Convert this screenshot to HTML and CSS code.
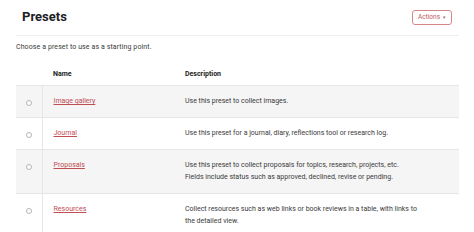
FILE: index.html
```html
<!DOCTYPE html>
<html lang="en">

<head>
  <meta charset="UTF-8">
  <meta name="viewport" content="width=device-width, initial-scale=1.0">
  <title>Presets</title>
  <link rel="stylesheet" href="styles.css">
</head>

<body>

  <div class="page">
    <div class="page-head">
      <h2>Presets</h2>
      <button class="actions">Actions <span class="caret">&#9662;</span></button>
    </div>
    <p class="intro">Choose a preset to use as a starting point.</p>

    <table class="presets">
      <thead>
        <tr>
          <th class="col-select"></th>
          <th class="col-name">Name</th>
          <th>Description</th>
        </tr>
      </thead>
      <tbody>
        <tr>
          <td class="col-select"><span class="radio"></span></td>
          <td class="col-name"><a href="#">Image gallery</a></td>
          <td>Use this preset to collect images.</td>
        </tr>
        <tr>
          <td class="col-select"><span class="radio"></span></td>
          <td class="col-name"><a href="#">Journal</a></td>
          <td>Use this preset for a journal, diary, reflections tool or research log.</td>
        </tr>
        <tr>
          <td class="col-select"><span class="radio"></span></td>
          <td class="col-name"><a href="#">Proposals</a></td>
          <td>Use this preset to collect proposals for topics, research, projects, etc.<br>Fields include status such as approved, declined, revise or pending.</td>
        </tr>
        <tr>
          <td class="col-select"><span class="radio"></span></td>
          <td class="col-name"><a href="#">Resources</a></td>
          <td>Collect resources such as web links or book reviews in a table, with links to<br>the detailed view.</td>
        </tr>
      </tbody>
    </table>
  </div>

</body>

</html>
```

FILE: styles.css
```css
* {
  margin: 0;
  padding: 0;
  box-sizing: border-box;
}

body {
  font-family: Roboto, "Liberation Sans", sans-serif;
  font-size: 7px;
  line-height: 12px;
  color: #3a3a3a;
  background: #fff;
}

.page {
  padding: 0 15px 0 16px;
}

.page-head {
  height: 36px;
  display: flex;
  align-items: center;
  justify-content: space-between;
  border-bottom: 1px solid #eeeeee;
  padding: 0 7px 1px 6px;
}

.page-head h2 {
  font-size: 13px;
  font-weight: 700;
  color: #1d2125;
  line-height: 16px;
}

.actions {
  font-family: inherit;
  font-size: 6.5px;
  color: #c25a60;
  background: #fff;
  border: 1px solid #d8858a;
  border-radius: 3px;
  height: 15px;
  padding: 0 5px;
  display: flex;
  align-items: center;
  gap: 3px;
}

.caret {
  font-size: 5px;
}

.intro {
  padding-top: 5px;
  height: 26px;
  letter-spacing: 0.1px;
}

.presets {
  width: 100%;
  border-collapse: collapse;
}

.presets th {
  text-align: left;
  font-weight: 700;
  color: #222;
  padding: 6px 11px 5px;
}

.presets td {
  padding: 9px 11px 10px;
  vertical-align: top;
  border-top: 1px solid #e6e6e6;
}

.presets tbody tr:nth-child(odd) {
  background: #f5f5f5;
}

.presets .col-select {
  width: 26px;
  padding: 0;
  text-align: center;
}

.presets td.col-select {
  padding-top: 12px;
}

.presets .col-name {
  width: 132px;
}

.presets td.col-name {
  border-left: 1px solid #e6e6e6;
}

.radio {
  display: inline-block;
  width: 6px;
  height: 6px;
  border: 1px solid #b5b5b5;
  border-radius: 50%;
  background: #fff;
}

.presets a {
  color: #bf4d53;
  text-decoration: underline;
}
```
